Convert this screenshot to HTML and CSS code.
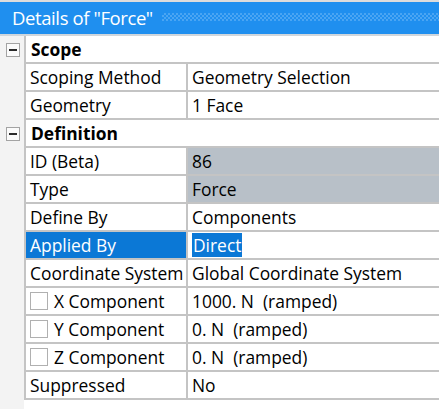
FILE: index.html
```html
<!DOCTYPE html>
<html>
<head>
<meta charset="utf-8">
<link rel="stylesheet" href="styles.css">
</head>
<body>
<div class="panel">
  <div class="titlebar">
    <span class="title-text">Details of "Force"</span>
    <span class="grip"></span>
  </div>
  <div class="grid">
    <div class="gutter"><span class="toggle"></span></div>
    <div class="cell header">Scope</div>

    <div class="gutter"></div>
    <div class="cell label">Scoping Method</div>
    <div class="cell value">Geometry Selection</div>

    <div class="gutter"></div>
    <div class="cell label">Geometry</div>
    <div class="cell value">1 Face</div>

    <div class="gutter"><span class="toggle"></span></div>
    <div class="cell header">Definition</div>

    <div class="gutter"></div>
    <div class="cell label">ID (Beta)</div>
    <div class="cell value readonly">86</div>

    <div class="gutter"></div>
    <div class="cell label">Type</div>
    <div class="cell value readonly">Force</div>

    <div class="gutter"></div>
    <div class="cell label">Define By</div>
    <div class="cell value">Components</div>

    <div class="gutter"></div>
    <div class="cell label selected">Applied By</div>
    <div class="cell value"><span class="hl">Direct</span></div>

    <div class="gutter"></div>
    <div class="cell label">Coordinate System</div>
    <div class="cell value">Global Coordinate System</div>

    <div class="gutter"></div>
    <div class="cell label"><span class="check"></span>X Component</div>
    <div class="cell value">1000. N&nbsp; (ramped)</div>

    <div class="gutter"></div>
    <div class="cell label"><span class="check"></span>Y Component</div>
    <div class="cell value">0. N&nbsp; (ramped)</div>

    <div class="gutter"></div>
    <div class="cell label"><span class="check"></span>Z Component</div>
    <div class="cell value">0. N&nbsp; (ramped)</div>

    <div class="gutter"></div>
    <div class="cell label">Suppressed</div>
    <div class="cell value">No</div>

    <div class="gutter"></div>
    <div class="blank"></div>
  </div>
</div>
</body>
</html>
```

FILE: styles.css
```css
html, body {
  margin: 0;
  padding: 0;
  background: #ffffff;
}
body {
  width: 439px;
  height: 409px;
  overflow: hidden;
  font-family: "Open Sans", "Noto Sans", sans-serif;
  font-size: 17.4px;
  color: #000;
}
.panel {
  display: flex;
  flex-direction: column;
  height: 409px;
}
.titlebar {
  flex: none;
  height: 32px;
  border-top: 2px solid #dcdcdc;
  border-bottom: 2px solid #cfd6dc;
  background: #1f8fef;
  display: flex;
  align-items: center;
  padding-left: 12px;
  gap: 9px;
}
.title-text {
  color: #ffffff;
  font-size: 18.5px;
  letter-spacing: -0.4px;
  white-space: nowrap;
  margin-top: -2px;
}
.grip {
  flex: 1;
  height: 8px;
  margin-top: -2px;
  background-image: conic-gradient(#4aa5f3 25%, transparent 0 50%, #4aa5f3 0 75%, transparent 0);
  background-size: 4px 4px;
}
.grid {
  flex: 1;
  min-height: 0;
  overflow: hidden;
  display: grid;
  grid-template-columns: 24px 162px 1fr;
  grid-template-rows: repeat(13, 28px) 1fr;
}
.gutter {
  background: #f3f3f3;
  display: flex;
  align-items: center;
  padding-left: 6px;
}
.blank {
  grid-column: 2 / 4;
}
.toggle {
  width: 12px;
  height: 12px;
  border: 1px solid #a3a3a3;
  background: #fbfbfb;
  position: relative;
}
.toggle::after {
  content: "";
  position: absolute;
  left: 2px;
  right: 2px;
  top: 5px;
  height: 2px;
  background: #2a2a2a;
}
.cell {
  border-left: 2px solid #c4c4c4;
  border-bottom: 2px solid #c4c4c4;
  display: flex;
  align-items: center;
  white-space: nowrap;
  overflow: hidden;
}
.header {
  grid-column: 2 / 4;
  font-weight: bold;
  padding-left: 5px;
}
.label {
  padding-left: 4px;
}
.value {
  padding-left: 4px;
}
.readonly {
  background: #b8c0c8;
}
.selected {
  background: #0b78d6;
  color: #ffffff;
}
.hl {
  background: #0b78d6;
  color: #ffffff;
  padding: 0 1px;
}
.check {
  width: 16px;
  height: 16px;
  border: 1px solid #b0b0b0;
  background: #fff;
  margin-right: 6px;
  flex: none;
}
```
